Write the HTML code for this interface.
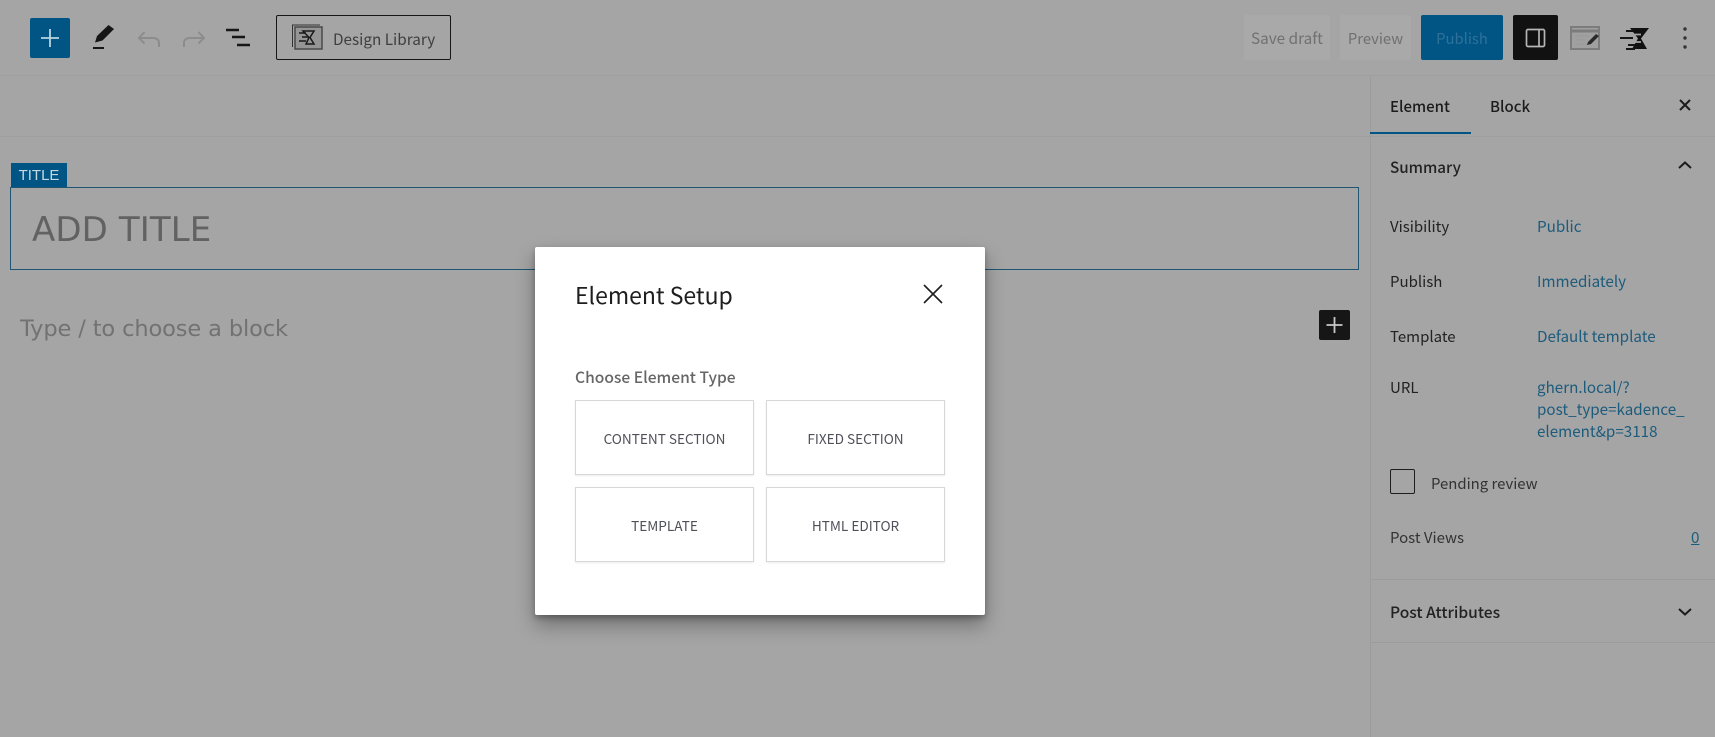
<!DOCTYPE html>
<html><head><meta charset="utf-8"><style>
html,body{margin:0;padding:0;width:1715px;height:737px;overflow:hidden;background:#a5a5a5}
body{position:relative;font-family:"Noto Sans CJK JP","Liberation Sans",sans-serif;color:#222}
.a{position:absolute;white-space:nowrap}
.t{position:absolute;white-space:nowrap;line-height:20px;font-size:15px;transform:translateY(-10px)}
.l{color:#1c5b7c;font-size:15.2px;margin-top:-1px}
.b{position:absolute;box-sizing:border-box;display:flex;align-items:center;justify-content:center;border-radius:2px}
.c{position:absolute;box-sizing:border-box;width:179px;height:75px;border:1px solid #d8d8d8;display:flex;align-items:center;justify-content:center;font-size:13.6px;color:#50505a;box-shadow:0 1px 2px rgba(0,0,0,.08)}
svg{position:absolute}
</style></head><body>
<div class="a" style="left:0;top:75px;width:1715px;height:1px;background:#9e9e9e"></div>
<div class="a" style="left:0;top:136px;width:1715px;height:1px;background:#9e9e9e"></div>
<div class="a" style="left:1370px;top:76px;width:1px;height:661px;background:#9c9c9c"></div>

<div class="b" style="left:30px;top:18px;width:40px;height:40px;background:#005585"></div>
<svg style="left:30px;top:18px" width="40" height="40"><path d="M20 11v18M11 20h18" stroke="#bcd3e0" stroke-width="1.800"/></svg>
<svg style="left:90px;top:22px" width="30" height="30"><path d="M5 20.500 7 14 18.500 3 24 7 12.500 18.500z" fill="#161616"/><path d="M3 26h11" stroke="#161616" stroke-width="2"/></svg>
<svg style="left:136px;top:29px" width="26" height="22" fill="none" stroke="#8c8c8c" stroke-width="2"><path d="M3 9h14c4 0 6 2 6 5v4M8.500 3 3 9l5.500 5.500"/></svg>
<svg style="left:181px;top:29px" width="26" height="22" fill="none" stroke="#8c8c8c" stroke-width="2"><path d="M23 9H9c-4 0-6 2-6 5v4M17.500 3 23 9l-5.500 5.500"/></svg>
<svg style="left:224px;top:27px" width="28" height="24" stroke="#161616" stroke-width="2.400"><path d="M2 3h13M8 10h13M13 18h13"/></svg>

<div class="a" style="left:276px;top:15px;width:175px;height:45px;box-sizing:border-box;border:1px solid #161616;border-radius:2px"></div>
<svg style="left:290px;top:22px" width="36" height="30" fill="none"><path d="M2.500 3v22" stroke="#333" stroke-width="1"/><path d="M2 3h28" stroke="#333"/><rect x="5" y="5" width="27" height="22" fill="#959595" stroke="#4a4a4a" stroke-width="1.500"/><path d="M9 11h7M12 15h6M9 19h7M13 9h11l-4 6.500 4 6.500h-8l3-6.500z" stroke="#1a1a1a" stroke-width="1.500"/></svg>
<div class="a" style="left:333px;top:27px;line-height:24px;font-size:15.300px;color:#3e3e3e">Design Library</div>

<div class="b" style="left:1244px;top:15px;width:86px;height:45px;background:#a9a9a9;font-size:15.300px;color:#707070">Save draft</div>
<div class="b" style="left:1340px;top:15px;width:71px;height:45px;background:#a9a9a9;font-size:14.800px;color:#707070;padding-top:1px">Preview</div>
<div class="b" style="left:1421px;top:15px;width:82px;height:45px;background:#005585;font-size:14.800px;color:#2f7198;padding-top:1px">Publish</div>
<div class="b" style="left:1513px;top:15px;width:45px;height:45px;background:#111"></div>
<svg style="left:1525px;top:28px" width="22" height="20" fill="none" stroke="#b5b5b5" stroke-width="1.700"><rect x="1.500" y="1.500" width="18" height="17" rx="1.500"/><path d="M14 1.500v17"/></svg>
<svg style="left:1569px;top:25px" width="34" height="26"><rect x="2" y="2" width="28" height="22" fill="#a0a0a0" stroke="#7c7c7c" stroke-width="2"/><path d="M2 6h28" stroke="#7c7c7c" stroke-width="3"/><path d="M6 11h14M6 15h10M6 19h12" stroke="#979797"/><path d="M18 20l1-3 8-8 3 2-8 8z" fill="#2a2a2a"/></svg>
<svg style="left:1619px;top:26px" width="32" height="26" fill="#111"><path d="M11 2h19l-8 10.500L28 23H13l6-10.500z"/><path d="M1 12h13M7 5h7M9 19h7M7 23h9" stroke="#161616" stroke-width="2"/><path d="M10 8.500h12M10 16h12" stroke="#a5a5a5" stroke-width="1.800"/></svg>
<svg style="left:1680px;top:26px" width="10" height="24" fill="#333"><circle cx="5" cy="3" r="1.700"/><circle cx="5" cy="12" r="1.700"/><circle cx="5" cy="21" r="1.700"/></svg>

<div class="t" style="left:1390px;top:107px;font-weight:500;color:#1c1c1c;font-size:15px">Element</div>
<div class="t" style="left:1490px;top:107px;font-weight:500;color:#1c1c1c;font-size:15px">Block</div>
<div class="a" style="left:1370px;top:132px;width:101px;height:2px;background:#005585"></div>
<svg style="left:1678px;top:98px" width="14" height="14" stroke="#1c1c1c" stroke-width="2"><path d="M2 2l10 10M12 2 2 12"/></svg>

<div class="t" style="left:1390px;top:167px;font-weight:500;color:#222;font-size:15.200px">Summary</div>
<svg style="left:1677px;top:159px" width="16" height="12" fill="none" stroke="#1c1c1c" stroke-width="2"><path d="M2 9l6-5.500L14 9"/></svg>
<div class="t" style="left:1390px;top:227px">Visibility</div>
<div class="t l" style="left:1537px;top:227px">Public</div>
<div class="t" style="left:1390px;top:282px">Publish</div>
<div class="t l" style="left:1537px;top:282px">Immediately</div>
<div class="t" style="left:1390px;top:337px">Template</div>
<div class="t l" style="left:1537px;top:337px">Default template</div>
<div class="t" style="left:1390px;top:388px">URL</div>
<div class="t l" style="left:1537px;top:388px">ghern.local/?</div>
<div class="t l" style="left:1537px;top:410px">post_type=kadence_</div>
<div class="t l" style="left:1537px;top:432px">element&amp;p=3118</div>
<div class="a" style="left:1390px;top:469px;width:25px;height:25px;box-sizing:border-box;border:1px solid #1e1e1e;border-radius:2px"></div>
<div class="t" style="left:1431px;top:484px;color:#333;font-size:14.900px">Pending review</div>
<div class="t" style="left:1390px;top:538px;color:#333">Post Views</div>
<div class="t l" style="left:1691px;top:538px;text-decoration:underline">0</div>
<div class="a" style="left:1370px;top:579px;width:345px;height:1px;background:#9b9b9b"></div>
<div class="t" style="left:1390px;top:612px;font-weight:500;font-size:15.600px">Post Attributes</div>
<svg style="left:1677px;top:606px" width="16" height="12" fill="none" stroke="#1c1c1c" stroke-width="2"><path d="M2 3l6 5.500L14 3"/></svg>
<div class="a" style="left:1370px;top:642px;width:345px;height:1px;background:#9b9b9b"></div>

<div class="a" style="left:11px;top:164px;width:56px;height:23px;background:#005585;color:#c4d8e4;font:15px/23px 'Liberation Sans',sans-serif;text-align:center;box-shadow:0 -1px 0 #005585">TITLE</div>
<div class="a" style="left:10px;top:187px;width:1349px;height:83px;box-sizing:border-box;border:1px solid #1f5570"></div>
<div class="a" style="left:32px;top:206px;font:34px/48px 'DejaVu Sans',sans-serif;color:#626262;letter-spacing:.1px">ADD TITLE</div>
<div class="a" style="left:20px;top:314px;font:22.500px/30px 'DejaVu Sans',sans-serif;color:#727272;letter-spacing:-.120px">Type / to choose a block</div>
<div class="b" style="left:1319px;top:310px;width:31px;height:30px;background:#161616"></div>
<svg style="left:1319px;top:310px" width="31" height="30"><path d="M15.500 7v16M7.500 15h16" stroke="#c8c8c8" stroke-width="1.800"/></svg>

<div class="a" style="left:535px;top:247px;width:450px;height:368px;background:#fff;border-radius:2px;box-shadow:0 10px 20px rgba(0,0,0,.32),0 3px 6px rgba(0,0,0,.25)"></div>
<div class="a" style="left:575px;top:277px;font-size:23px;line-height:34px;color:#1e1e1e">Element Setup</div>
<svg style="left:922px;top:283px" width="22" height="22" stroke="#1e1e1e" stroke-width="1.600"><path d="M2 2l18 18M20 2 2 20"/></svg>
<div class="a" style="left:575px;top:365px;font-size:15.600px;line-height:24px;font-weight:500;color:#666">Choose Element Type</div>
<div class="c" style="left:575px;top:400px">CONTENT SECTION</div>
<div class="c" style="left:766px;top:400px">FIXED SECTION</div>
<div class="c" style="left:575px;top:487px;padding-top:1px">TEMPLATE</div>
<div class="c" style="left:766px;top:487px;padding-top:1px">HTML EDITOR</div>
</body></html>
